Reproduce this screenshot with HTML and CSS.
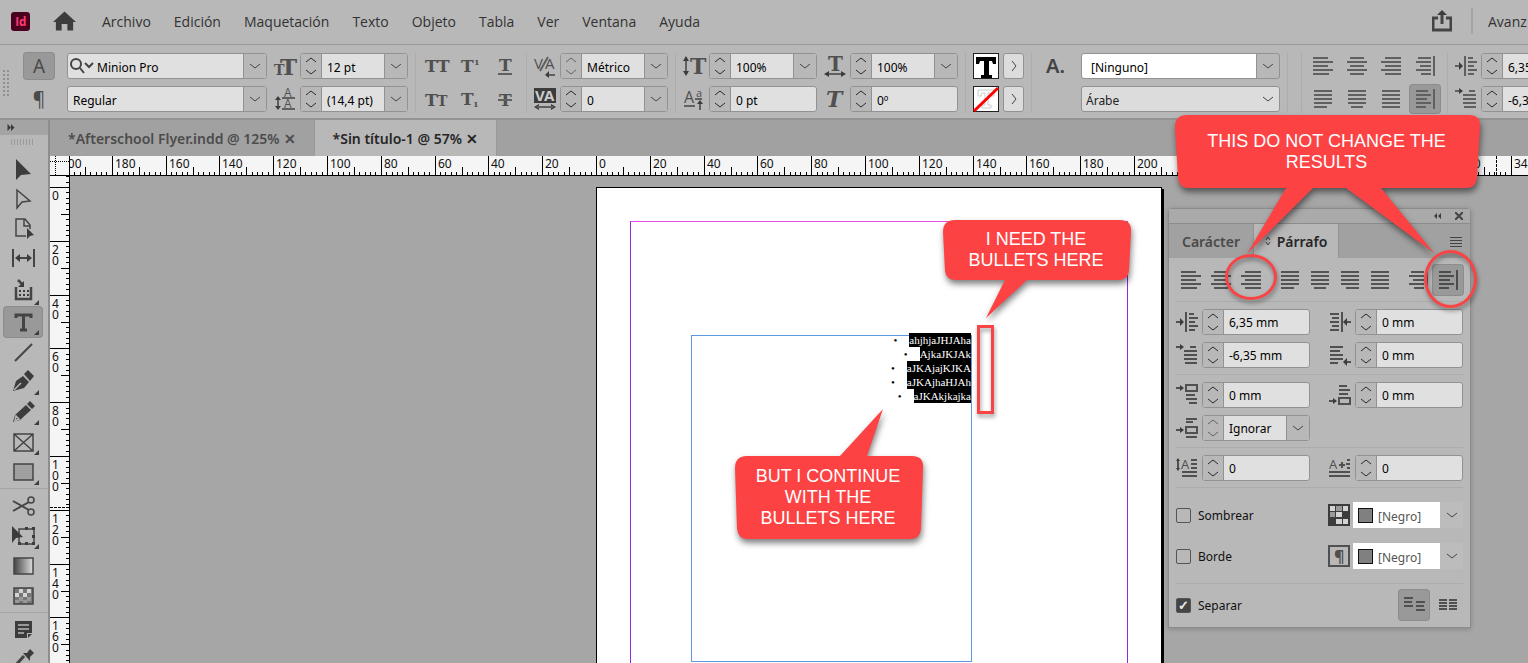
FILE: index.html
```html
<!DOCTYPE html>
<html lang="es">
  <head>
    <meta charset="UTF-8" />
    <meta name="viewport" content="width=device-width, initial-scale=1.0" />
    <title>Sin título-1</title>
    <link rel="stylesheet" href="styles.css">
  </head>

  <body>
    <!-- icon set -->
    <svg class="defs" aria-hidden="true">
      <symbol id="down" viewBox="0 0 12 12"><path d="M1 4l5 4 5-4" /></symbol>
      <symbol id="up" viewBox="0 0 12 12"><path d="M1 8l5-4 5 4" /></symbol>
      <symbol id="right" viewBox="0 0 12 12"><path d="M4 1l4 5-4 5" /></symbol>
      <symbol id="al-left" viewBox="0 0 22 22"><path d="M1 3h15M1 7h20M1 11h15M1 15h20M1 19h16" /></symbol>
      <symbol id="al-center" viewBox="0 0 22 22"><path d="M4 3h14M1 7h20M4 11h14M1 15h20M4 19h14" /></symbol>
      <symbol id="al-right" viewBox="0 0 22 22"><path d="M5 3h16M1 7h20M5 11h16M1 15h20M5 19h16" /></symbol>
      <symbol id="ju-left" viewBox="0 0 22 22"><path d="M2 3h18M2 7h18M2 11h18M2 15h18M2 19h13" /></symbol>
      <symbol id="ju-center" viewBox="0 0 22 22"><path d="M2 3h18M2 7h18M2 11h18M2 15h18M5 19h12" /></symbol>
      <symbol id="ju-right" viewBox="0 0 22 22"><path d="M2 3h18M2 7h18M2 11h18M2 15h18M7 19h13" /></symbol>
      <symbol id="ju-all" viewBox="0 0 22 22"><path d="M2 3h18M2 7h18M2 11h18M2 15h18M2 19h18" /></symbol>
      <symbol id="spine-to" viewBox="0 0 22 22"><path d="M4 3h13M2 7h15M6 11h11M2 15h15M7 19h10M20 1v20" /></symbol>
      <symbol id="spine-off" viewBox="0 0 22 22"><path d="M2 3h12M2 7h15M2 11h11M2 15h15M2 19h10M20 1v20" /></symbol>
      <symbol id="in-left" viewBox="0 0 22 22"><path d="M0 11h6M10 1v20M13 3h5M13 7h9M13 11h6M13 15h9M13 19h6" /><path class="fill" d="M4 7l4 4-4 4z" /></symbol>
      <symbol id="in-right" viewBox="0 0 22 22"><path d="M22 11h-6M13 1v20M1 3h9M3 7h7M1 11h9M3 15h7M1 19h9" /><path class="fill" d="M18 7l-4 4 4 4z" /></symbol>
      <symbol id="in-first" viewBox="0 0 22 22"><path d="M0 3h5M14 3h6M8 7h13M8 11h13M8 15h13M9 19h12" /><path class="fill" d="M4 0l4 3-4 3z" /></symbol>
      <symbol id="in-last" viewBox="0 0 22 22"><path d="M1 3h13M1 7h10M1 11h13M1 15h13M1 19h8M22 18h-5" /><path class="fill" d="M18 14l-4 4 4 4z" /></symbol>
      <symbol id="sp-before" viewBox="0 0 22 22"><path d="M0 4h5M10 1h11v6h-11zM10 11h9M10 15h11M13 19h8" /><path class="fill" d="M4 1l4 3-4 3z" /></symbol>
      <symbol id="sp-after" viewBox="0 0 22 22"><path d="M10 2h8M10 6h11M10 10h9M0 17h5M10 14h11v6h-11z" /><path class="fill" d="M4 14l4 3-4 3z" /></symbol>
      <symbol id="sp-between" viewBox="0 0 22 22"><path d="M10 2h11M10 5h7M0 13h5M10 10h11v6h-11zM10 20h11" /><path class="fill" d="M4 10l4 3-4 3z" /></symbol>
      <symbol id="drop-lines" viewBox="0 0 22 22"><path d="M2 3v9M15 3h6M15 7h6M15 11h6M6 15h15M6 19h15" /><path class="fill" d="M2 1l2 3h-4zM2 14l2-3h-4z" /><text x="5" y="12" font-size="13">A</text></symbol>
      <symbol id="drop-chars" viewBox="0 0 22 22"><path d="M10 8h6M13 5v6M18 3h3M17 7h4M18 11h3M0 15h21M0 19h21" /><text x="0" y="12" font-size="13">A</text></symbol>
      <symbol id="corner" viewBox="0 0 6 6"><path class="fill" d="M6 0v6h-6z" /></symbol>
    </svg>

    <header class="menubar">
      <svg class="logo" viewBox="0 0 18 18"><rect width="18" height="18" rx="3" /><text x="4" y="13">Id</text></svg>
      <svg class="home" viewBox="0 0 24 22"><path d="M12 1L0 12h3v9h6v-7h6v7h6v-9h3z" /></svg>
      <nav class="menu">
        <a href="#">Archivo</a>
        <a href="#">Edición</a>
        <a href="#">Maquetación</a>
        <a href="#">Texto</a>
        <a href="#">Objeto</a>
        <a href="#">Tabla</a>
        <a href="#">Ver</a>
        <a href="#">Ventana</a>
        <a href="#">Ayuda</a>
      </nav>
      <button class="share" aria-label="Compartir">
        <svg viewBox="0 0 20 22"><path d="M6 8H1v12h18V8h-5M10 14V3" /><path class="fill" d="M10 0l5 5H5z" /></svg>
      </button>
      <a class="workspace-name" href="#">Avanz</a>
    </header>

    <section class="control">
      <div class="grip"></div>
      <div class="stack modes">
        <button class="mode on">A</button>
        <button class="mode">¶</button>
      </div>

      <div class="stack fonts">
        <div class="field">
          <label class="search">
            <svg class="lens" viewBox="0 0 24 16"><circle cx="6" cy="6" r="5" /><path d="M10 10l4 5M15 5l4 4 4-4" /></svg>
            <input type="text" value="Minion Pro" aria-label="Fuente" />
          </label>
          <button class="drop" aria-label="Abrir"><svg><use href="#down" /></svg></button>
        </div>
        <div class="field">
          <input type="text" value="Regular" aria-label="Estilo" />
          <button class="drop" aria-label="Abrir"><svg><use href="#down" /></svg></button>
        </div>
      </div>

      <div class="stack">
        <div class="line">
          <svg class="ico" viewBox="0 0 22 22"><text class="slab" x="0" y="20" font-size="14">T</text><text class="slab" x="6" y="20" font-size="23">T</text></svg>
          <div class="field num">
            <div class="spin"><button aria-label="Más"><svg><use href="#up" /></svg></button><button aria-label="Menos"><svg><use href="#down" /></svg></button></div>
            <input type="text" value="12 pt" aria-label="Tamaño" />
            <button class="drop" aria-label="Abrir"><svg><use href="#down" /></svg></button>
          </div>
        </div>
        <div class="line">
          <svg class="ico" viewBox="0 0 22 22"><path d="M4 11v8M8 10h13M8 21h13" /><path class="fill" d="M4 8l3 4H1zM4 22l3-4H1z" /><text x="10" y="9" font-size="12">A</text><text x="10" y="20" font-size="12">A</text></svg>
          <div class="field num">
            <div class="spin"><button aria-label="Más"><svg><use href="#up" /></svg></button><button aria-label="Menos"><svg><use href="#down" /></svg></button></div>
            <input type="text" value="(14,4 pt)" aria-label="Interlineado" />
            <button class="drop" aria-label="Abrir"><svg><use href="#down" /></svg></button>
          </div>
        </div>
      </div>

      <div class="sep"></div>
      <div class="type-grid">
        <button aria-label="Mayúsculas"><svg class="ico wide" viewBox="0 0 28 22"><text class="slab" x="2" y="17" font-size="17">T</text><text class="slab" x="14" y="17" font-size="17">T</text></svg></button>
        <button aria-label="Superíndice"><svg class="ico wide" viewBox="0 0 28 22"><text class="slab" x="4" y="17" font-size="17">T</text><text class="slab" x="17" y="10" font-size="8">1</text></svg></button>
        <button aria-label="Subrayado"><svg class="ico wide" viewBox="0 0 28 22"><text class="slab" x="8" y="16" font-size="17">T</text><path d="M7 19h14" /></svg></button>
        <button aria-label="Versalitas"><svg class="ico wide" viewBox="0 0 28 22"><text class="slab" x="2" y="18" font-size="17">T</text><text class="slab" x="14" y="18" font-size="14">T</text></svg></button>
        <button aria-label="Subíndice"><svg class="ico wide" viewBox="0 0 28 22"><text class="slab" x="4" y="17" font-size="17">T</text><text class="slab" x="16" y="19" font-size="8">1</text></svg></button>
        <button aria-label="Tachado"><svg class="ico wide" viewBox="0 0 28 22"><text class="slab" x="8" y="18" font-size="17">T</text><path d="M7 12h14" /></svg></button>
      </div>
      <div class="sep"></div>

      <div class="stack">
        <div class="line">
          <svg class="ico" viewBox="0 0 22 22"><text x="0" y="14" font-size="15">V</text><text x="11" y="14" font-size="15">A</text><path d="M6 16L14 2M14 20h7" /><path class="fill" d="M15 16l-4 4 4 3z" /></svg>
          <div class="field num">
            <div class="spin off"><button aria-label="Más"><svg><use href="#up" /></svg></button><button aria-label="Menos"><svg><use href="#down" /></svg></button></div>
            <input type="text" value="Métrico" aria-label="Kerning" />
            <button class="drop" aria-label="Abrir"><svg><use href="#down" /></svg></button>
          </div>
        </div>
        <div class="line">
          <svg class="ico" viewBox="0 0 22 22"><path class="fill" d="M0 0h22v15H0zM0 19l5-3v6zM22 19l-5-3v6z" /><path d="M3 19h16" /><text class="light" x="1" y="13" font-size="15">V</text><text class="light" x="10" y="13" font-size="15">A</text></svg>
          <div class="field num">
            <div class="spin"><button aria-label="Más"><svg><use href="#up" /></svg></button><button aria-label="Menos"><svg><use href="#down" /></svg></button></div>
            <input type="text" value="0" aria-label="Tracking" />
            <button class="drop" aria-label="Abrir"><svg><use href="#down" /></svg></button>
          </div>
        </div>
      </div>
      <div class="sep"></div>

      <div class="stack">
        <div class="line">
          <svg class="ico" viewBox="0 0 22 22"><path d="M3 5v12" /><path class="fill" d="M3 1l3 5H0zM3 21l3-5H0z" /><text class="slab" x="7" y="19" font-size="22">T</text></svg>
          <div class="field num">
            <div class="spin"><button aria-label="Más"><svg><use href="#up" /></svg></button><button aria-label="Menos"><svg><use href="#down" /></svg></button></div>
            <input type="text" value="100%" aria-label="Escala vertical" />
            <button class="drop" aria-label="Abrir"><svg><use href="#down" /></svg></button>
          </div>
        </div>
        <div class="line">
          <svg class="ico" viewBox="0 0 22 22"><text x="1" y="15" font-size="16">A</text><text x="13" y="9" font-size="11">a</text><path d="M1 18h11M12 11h7M17 15v7" /><path class="fill" d="M17 12l3 4h-6z" /></svg>
          <div class="field num">
            <div class="spin"><button aria-label="Más"><svg><use href="#up" /></svg></button><button aria-label="Menos"><svg><use href="#down" /></svg></button></div>
            <input type="text" value="0 pt" aria-label="Desplazamiento vertical" />
          </div>
        </div>
      </div>

      <div class="stack">
        <div class="line">
          <svg class="ico" viewBox="0 0 22 22"><text class="slab" x="4" y="16" font-size="20">T</text><path d="M3 19h16" /><path class="fill" d="M0 19l5-3v6zM22 19l-5-3v6z" /></svg>
          <div class="field num">
            <div class="spin"><button aria-label="Más"><svg><use href="#up" /></svg></button><button aria-label="Menos"><svg><use href="#down" /></svg></button></div>
            <input type="text" value="100%" aria-label="Escala horizontal" />
            <button class="drop" aria-label="Abrir"><svg><use href="#down" /></svg></button>
          </div>
        </div>
        <div class="line">
          <svg class="ico" viewBox="0 0 22 22"><text class="slab slant" x="2" y="19" font-size="22">T</text></svg>
          <div class="field num">
            <div class="spin"><button aria-label="Más"><svg><use href="#up" /></svg></button><button aria-label="Menos"><svg><use href="#down" /></svg></button></div>
            <input type="text" value="0º" aria-label="Inclinación" />
          </div>
        </div>
      </div>
      <div class="sep"></div>

      <div class="stack">
        <div class="line">
          <svg class="swatch" viewBox="0 0 26 26"><rect width="26" height="26" fill="#222" /><rect x="1" y="1" width="24" height="24" fill="#fff" /><path d="M3 4h20v7h-3l-1-3h-3v14h3v3H8v-3h3V8H7l-1 3H3z" fill="#000" /></svg>
          <button class="more" aria-label="Relleno"><svg><use href="#right" /></svg></button>
        </div>
        <div class="line">
          <svg class="swatch" viewBox="0 0 26 26"><rect width="26" height="26" fill="#222" /><rect x="1" y="1" width="24" height="24" fill="#fff" /><path d="M5 4h16v6h-3l-1-3h-2v12h3v3H9v-3h3V7H9l-1 3H5z" fill="none" stroke="#ccc" /><path d="M1 25L25 2" stroke="#f00" stroke-width="3" /></svg>
          <button class="more" aria-label="Trazo"><svg><use href="#right" /></svg></button>
        </div>
      </div>
      <div class="sep"></div>

      <div class="char-style">
        <span class="style-mark">A.</span>
        <div class="stack styles">
          <div class="pick split white">
            <select aria-label="Estilo de carácter"><option>[Ninguno]</option></select>
            <svg><use href="#down" /></svg>
          </div>
          <div class="pick">
            <select aria-label="Idioma"><option>Árabe</option></select>
            <svg><use href="#down" /></svg>
          </div>
        </div>
      </div>
      <div class="sep"></div>
      <div class="sep second"></div>

      <div class="align-grid">
        <button aria-label="Izquierda"><svg class="ico"><use href="#al-left" /></svg></button>
        <button aria-label="Centro"><svg class="ico"><use href="#al-center" /></svg></button>
        <button aria-label="Derecha"><svg class="ico"><use href="#al-right" /></svg></button>
        <button aria-label="Hacia el lomo"><svg class="ico"><use href="#spine-to" /></svg></button>
        <button aria-label="Justificar izquierda"><svg class="ico"><use href="#ju-left" /></svg></button>
        <button aria-label="Justificar centro"><svg class="ico"><use href="#ju-center" /></svg></button>
        <button aria-label="Justificar todo"><svg class="ico"><use href="#ju-all" /></svg></button>
        <button class="on" aria-label="Opuesto al lomo"><svg class="ico"><use href="#spine-off" /></svg></button>
      </div>
      <div class="sep"></div>

      <div class="stack">
        <div class="line">
          <svg class="ico"><use href="#in-left" /></svg>
          <div class="field num">
            <div class="spin"><button aria-label="Más"><svg><use href="#up" /></svg></button><button aria-label="Menos"><svg><use href="#down" /></svg></button></div>
            <input type="text" value="6,35 mm" aria-label="Sangría izquierda" />
          </div>
        </div>
        <div class="line">
          <svg class="ico"><use href="#in-first" /></svg>
          <div class="field num">
            <div class="spin"><button aria-label="Más"><svg><use href="#up" /></svg></button><button aria-label="Menos"><svg><use href="#down" /></svg></button></div>
            <input type="text" value="-6,35 mm" aria-label="Sangría primera línea" />
          </div>
        </div>
      </div>
    </section>

    <div class="main">
      <aside class="tools">
        <div class="tools-head"><svg viewBox="0 0 8 8"><path class="fill" d="M0 0l4 4-4 4zM4 0l4 4-4 4z" /></svg></div>
        <div class="tools-grip"></div>
        <button class="tool" aria-label="Selección"><svg viewBox="0 2 26 26"><path class="fill" d="M6 2v21l5-5 10-1z" /></svg></button>
        <button class="tool" aria-label="Selección directa"><svg viewBox="0 3 26 26"><path d="M7 4v18l5-6 8-1z" /></svg></button>
        <button class="tool" aria-label="Página"><svg viewBox="0 4 26 26"><path d="M16 21H6V4h9l5 6v4M14 4v7h6" /><path class="fill" d="M17 13v11l3-3 4-1z" /></svg></button>
        <button class="tool" aria-label="Espacio"><svg viewBox="0 4 26 26"><path d="M3 4v18M24 4v18M7 13h12" stroke-width="2" /><path class="fill" d="M5 13l5-4v8zM22 13l-5-4v8z" /></svg></button>
        <button class="tool" aria-label="Recopilador"><svg viewBox="0 2 26 26"><path d="M6 10v12h15V10M8 3l5 5" stroke-width="2.5" /><path class="fill" d="M14 4v6H8zM9 13h2v2H9zM13 13h2v2h-2zM17 13h2v2h-2zM9 17h2v2H9zM13 17h2v2h-2zM17 17h2v2h-2z" /></svg><svg class="nub"><use href="#corner" /></svg></button>
        <button class="tool on" aria-label="Texto"><svg viewBox="0 0 26 26"><path d="M6 9V6h15v3M13.5 6v15M10 21h7" stroke-width="3" /></svg><svg class="nub"><use href="#corner" /></svg></button>
        <button class="tool" aria-label="Línea"><svg viewBox="0 0 26 26"><path d="M5 22L22 5" stroke-width="2" /></svg></button>
        <button class="tool" aria-label="Pluma"><svg viewBox="0 0 26 26"><path class="fill" d="M3 22l3-10 7-5 6 6-5 6zM14 5l4-4 6 6-4 5z" /><path class="cut" d="M4 21l7-7" /></svg><svg class="nub"><use href="#corner" /></svg></button>
        <button class="tool" aria-label="Lápiz"><svg viewBox="0 0 26 26"><path class="fill" d="M3 23l2-7L16 6l5 5-11 10zM17 5l3-3 5 5-3 3z" /><path class="cut" d="M6 17l3 3-4 2z" /></svg><svg class="nub"><use href="#corner" /></svg></button>
        <button class="tool" aria-label="Marco rectangular"><svg viewBox="0 0 26 26"><path d="M4 5h19v17H4zM4 5l19 17M23 5L4 22" /></svg><svg class="nub"><use href="#corner" /></svg></button>
        <button class="tool" aria-label="Rectángulo"><svg viewBox="0 0 26 26"><path d="M4 5h19v16H4z" fill="#a0a0a0" /></svg><svg class="nub"><use href="#corner" /></svg></button>
        <div class="tools-sep"></div>
        <button class="tool" aria-label="Tijeras"><svg viewBox="0 0 26 26"><path d="M3 8l16 9M3 18l16-9" stroke-width="2" /><circle cx="21" cy="7" r="3" /><circle cx="21" cy="19" r="3" /></svg></button>
        <button class="tool" aria-label="Transformación libre"><svg viewBox="0 0 26 26"><path d="M9 6h15v15H9z" /><path class="fill" d="M2 3v17l4-5 7-1zM15 4h3v3h-3zM22 4h3v3h-3zM22 12h3v3h-3zM22 19h3v3h-3zM15 19h3v3h-3zM8 19h3v3H8z" /></svg><svg class="nub"><use href="#corner" /></svg></button>
        <button class="tool" aria-label="Muestra de degradado"><svg viewBox="0 0 26 26"><defs><linearGradient id="fade"><stop offset="0" stop-color="#444" /><stop offset="1" stop-color="#ddd" /></linearGradient></defs><path d="M4 5h19v16H4z" fill="url(#fade)" /></svg></button>
        <button class="tool" aria-label="Desvanecer"><svg viewBox="0 0 26 26"><path d="M4 5h19v16H4z" fill="#777" /><path class="pale" d="M9 6h4v4H9zM17 6h4v4h-4zM5 10h4v4H5zM13 10h4v4h-4z" /><path class="pale dim" d="M9 14h4v4H9zM17 14h4v4h-4zM5 17h4v3H5zM13 17h4v3h-4z" /></svg></button>
        <div class="tools-sep"></div>
        <button class="tool" aria-label="Nota"><svg viewBox="0 0 26 26"><path class="fill" d="M5 4h17v12h-5v5H5zM18 17h4l-4 4z" /><path class="cut" d="M8 8h11M8 12h11M8 16h6" /></svg></button>
        <button class="tool" aria-label="Cuentagotas"><svg viewBox="0 0 26 26"><path class="fill" d="M13 6l4 0 3-4 4 4-4 4v4z" /><path d="M14 9L4 20" stroke-width="3" /></svg></button>
      </aside>

      <div class="document">
        <div class="tabs">
          <div class="tab"><span>*Afterschool Flyer.indd @ 125%</span><button aria-label="Cerrar">✕</button></div>
          <div class="tab current"><span>*Sin título-1 @ 57%</span><button aria-label="Cerrar">✕</button></div>
        </div>
        <div class="view">
          <div class="ruler-corner"></div>
          <svg class="ruler-x"></svg>
          <svg class="ruler-y"></svg>
          <div class="canvas">
            <div class="page">
              <div class="margins"></div>
              <div class="frame">
                <ul class="story">
                  <li><span>ahjhjaJHJAha</span></li>
                  <li><span>AjkaJKJAk</span></li>
                  <li><span>aJKAjajKJKA</span></li>
                  <li><span>aJKAjhaHJAh</span></li>
                  <li><span>aJKAkjkajka</span></li>
                </ul>
              </div>
            </div>
          </div>
        </div>
      </div>
    </div>

    <section class="panel">
      <div class="panel-title">
        <button aria-label="Contraer"><svg viewBox="0 0 8 8"><path class="fill" d="M4 1L1 4l3 3zM8 1L5 4l3 3z" /></svg></button>
        <button aria-label="Cerrar"><svg viewBox="0 0 8 8"><path d="M0 0l8 8M8 0L0 8" stroke-width="2" /></svg></button>
      </div>
      <div class="panel-tabs">
        <button class="ptab">Carácter</button>
        <button class="ptab current"><svg viewBox="0 0 6 10"><path d="M1 4l2-3 2 3M1 6l2 3 2-3" /></svg>Párrafo</button>
        <button class="panel-menu" aria-label="Menú"><svg viewBox="0 0 12 10"><path d="M0 1h12M0 4h12M0 7h12M0 10h12" /></svg></button>
      </div>
      <div class="panel-body">
        <div class="aligns">
          <div>
            <button aria-label="Izquierda"><svg class="ico"><use href="#al-left" /></svg></button>
            <button aria-label="Centro"><svg class="ico"><use href="#al-center" /></svg></button>
            <button aria-label="Derecha"><svg class="ico"><use href="#al-right" /></svg></button>
          </div>
          <div>
            <button aria-label="Justificar izquierda"><svg class="ico"><use href="#ju-left" /></svg></button>
            <button aria-label="Justificar centro"><svg class="ico"><use href="#ju-center" /></svg></button>
            <button aria-label="Justificar derecha"><svg class="ico"><use href="#ju-right" /></svg></button>
            <button aria-label="Justificar todo"><svg class="ico"><use href="#ju-all" /></svg></button>
          </div>
          <div>
            <button aria-label="Hacia el lomo"><svg class="ico"><use href="#spine-to" /></svg></button>
            <button class="on" aria-label="Opuesto al lomo"><svg class="ico"><use href="#spine-off" /></svg></button>
          </div>
        </div>

        <div class="block">
          <div class="line">
            <svg class="ico"><use href="#in-left" /></svg>
            <div class="field num">
              <div class="spin"><button aria-label="Más"><svg><use href="#up" /></svg></button><button aria-label="Menos"><svg><use href="#down" /></svg></button></div>
              <input type="text" value="6,35 mm" aria-label="Sangría izquierda" />
            </div>
          </div>
          <div class="line">
            <svg class="ico"><use href="#in-right" /></svg>
            <div class="field num">
              <div class="spin"><button aria-label="Más"><svg><use href="#up" /></svg></button><button aria-label="Menos"><svg><use href="#down" /></svg></button></div>
              <input type="text" value="0 mm" aria-label="Sangría derecha" />
            </div>
          </div>
          <div class="line">
            <svg class="ico"><use href="#in-first" /></svg>
            <div class="field num">
              <div class="spin"><button aria-label="Más"><svg><use href="#up" /></svg></button><button aria-label="Menos"><svg><use href="#down" /></svg></button></div>
              <input type="text" value="-6,35 mm" aria-label="Sangría primera línea" />
            </div>
          </div>
          <div class="line">
            <svg class="ico"><use href="#in-last" /></svg>
            <div class="field num">
              <div class="spin"><button aria-label="Más"><svg><use href="#up" /></svg></button><button aria-label="Menos"><svg><use href="#down" /></svg></button></div>
              <input type="text" value="0 mm" aria-label="Sangría última línea" />
            </div>
          </div>
        </div>

        <div class="block">
          <div class="line">
            <svg class="ico"><use href="#sp-before" /></svg>
            <div class="field num">
              <div class="spin"><button aria-label="Más"><svg><use href="#up" /></svg></button><button aria-label="Menos"><svg><use href="#down" /></svg></button></div>
              <input type="text" value="0 mm" aria-label="Espacio anterior" />
            </div>
          </div>
          <div class="line">
            <svg class="ico"><use href="#sp-after" /></svg>
            <div class="field num">
              <div class="spin"><button aria-label="Más"><svg><use href="#up" /></svg></button><button aria-label="Menos"><svg><use href="#down" /></svg></button></div>
              <input type="text" value="0 mm" aria-label="Espacio posterior" />
            </div>
          </div>
          <div class="line">
            <svg class="ico"><use href="#sp-between" /></svg>
            <div class="field num">
              <div class="spin off"><button aria-label="Más"><svg><use href="#up" /></svg></button><button aria-label="Menos"><svg><use href="#down" /></svg></button></div>
              <input type="text" value="Ignorar" aria-label="Espacio entre párrafos" />
              <button class="drop" aria-label="Abrir"><svg><use href="#down" /></svg></button>
            </div>
          </div>
        </div>

        <div class="block">
          <div class="line">
            <svg class="ico"><use href="#drop-lines" /></svg>
            <div class="field num">
              <div class="spin"><button aria-label="Más"><svg><use href="#up" /></svg></button><button aria-label="Menos"><svg><use href="#down" /></svg></button></div>
              <input type="text" value="0" aria-label="Líneas de capitular" />
            </div>
          </div>
          <div class="line">
            <svg class="ico"><use href="#drop-chars" /></svg>
            <div class="field num">
              <div class="spin"><button aria-label="Más"><svg><use href="#up" /></svg></button><button aria-label="Menos"><svg><use href="#down" /></svg></button></div>
              <input type="text" value="0" aria-label="Caracteres capitulares" />
            </div>
          </div>
        </div>

        <div class="block paint">
          <div class="row">
            <label class="check"><input type="checkbox" />Sombrear</label>
            <div class="color">
              <svg class="ico" viewBox="0 0 22 22"><path class="fill" d="M0 0h22v22H0z" /><path class="pale" d="M2 2h5v5H2zM15 2h5v5h-5zM8 8h6v5H8zM8 15h6v5H8zM15 15h5v5h-5z" /><path class="pale dim" d="M8 2h6v5H8zM2 8h5v5H2z" /></svg>
              <div class="pick tint">
                <select aria-label="Color de sombreado"><option>[Negro]</option></select>
                <i></i>
                <svg><use href="#down" /></svg>
              </div>
            </div>
          </div>
          <div class="row">
            <label class="check"><input type="checkbox" />Borde</label>
            <div class="color">
              <svg class="ico" viewBox="0 0 22 22"><path d="M1 1h20v20H1z" stroke-width="2" /><text class="bold" x="6" y="17" font-size="16">¶</text></svg>
              <div class="pick tint">
                <select aria-label="Color de borde"><option>[Negro]</option></select>
                <i></i>
                <svg><use href="#down" /></svg>
              </div>
            </div>
          </div>
        </div>

        <div class="row last">
          <label class="check"><input type="checkbox" checked />Separar</label>
          <div class="aligns-end">
            <button class="on" aria-label="Cuadrícula no"><svg class="ico" viewBox="0 0 22 22"><path d="M1 4h9M1 8h8M1 12h9M13 8h9M13 12h8M13 16h9" /></svg></button>
            <button aria-label="Cuadrícula sí"><svg class="ico" viewBox="0 0 22 22"><path d="M2 6h8M2 9h8M2 12h8M2 15h8M12 6h8M12 9h8M12 12h8M12 15h8" /></svg></button>
          </div>
        </div>
      </div>
    </section>

    <!-- review notes over the workspace -->
    <div class="note note-results">
      <svg viewBox="0 0 306 140"><path d="M12 0H294Q306 0 305 12L302 63Q301 73 291 73H206L259 138L171 73H138L72 139L111 73H14Q4 73 3 63L0 12Q0 0 12 0Z" /></svg>
      <p>THIS DO NOT CHANGE THE RESULTS</p>
    </div>
    <div class="note note-need">
      <svg viewBox="0 0 189 98"><path d="M12 0H177Q189 0 188 12L186 51Q185 60 175 60H84L43 98L62 60H13Q3 60 2 51L0 12Q0 0 12 0Z" /></svg>
      <p>I NEED THE BULLETS HERE</p>
    </div>
    <div class="note note-continue">
      <svg viewBox="0 0 189 130"><path d="M12 47H105L148 0L132 47H177Q189 47 188 59L186 120Q185 130 175 130H13Q3 130 2 120L0 59Q0 47 12 47Z" /></svg>
      <p>BUT I CONTINUE WITH THE BULLETS HERE</p>
    </div>
    <div class="ring ring-right"></div>
    <div class="ring ring-spine"></div>
    <div class="target"></div>

    <script src="script.js"></script>
  </body>
</html>
```

FILE: styles.css
```css
* {
  box-sizing: border-box;
  margin: 0;
  padding: 0;
}

body {
  position: relative;
  display: flex;
  flex-direction: column;
  height: 100vh;
  overflow: hidden;
  background-color: #a6a6a6;
  color: #111;
  font-family: "Noto Sans", "Open Sans", sans-serif;
  font-size: 12px;
}

button {
  border: 0;
  background: none;
  color: inherit;
  font: inherit;
}

a {
  color: inherit;
  text-decoration: none;
}

svg {
  display: block;
  fill: none;
  stroke: #444;
}

svg text {
  fill: #505050;
  stroke: none;
  font-family: "Open Sans", sans-serif;
}

.defs {
  position: absolute;
  width: 0;
  height: 0;
}

.fill {
  fill: #3c3c3c;
  stroke: none;
}

.cut {
  stroke: #b8b8b8;
}

.pale {
  fill: #d4d4d4;
  stroke: none;
}

.dim {
  fill: #999;
}

.ico {
  flex: none;
  width: 22px;
  height: 22px;
  overflow: visible;
  stroke: #606060;
  stroke-width: 2px;
}

.wide {
  width: 28px;
}

svg .slab {
  font-family: "DejaVu Serif", serif;
  font-weight: bold;
}

svg .slant {
  font-style: italic;
}

svg .light {
  fill: #ccc;
  font-weight: bold;
}

svg .bold {
  font-weight: bold;
}

/* menu */
.menubar {
  display: flex;
  flex: none;
  align-items: center;
  height: 45px;
  padding: 0 0 2px 11px;
  border-bottom: 1px solid #9a9a9a;
  background-color: #b8b8b8;
  color: #333;
  font-family: "Open Sans", sans-serif;
  font-size: 14px;
  white-space: nowrap;
  overflow: hidden;
}

.logo {
  width: 19px;
  height: 19px;
  margin-right: 23px;
}

.logo rect {
  fill: #4b0020;
  stroke: none;
}

.logo text {
  fill: #ff3b74;
  font-size: 11px;
  font-weight: bold;
}

.home {
  width: 23px;
  height: 22px;
  margin-right: 26px;
}

.home path {
  fill: #3c3c3c;
  stroke: none;
}

.menu {
  display: flex;
  flex: 1;
  gap: 23px;
}

.share {
  width: 41px;
  height: 26px;
  border-right: 2px solid #a4a4a4;
}

.share svg {
  width: 20px;
  height: 22px;
  stroke-width: 3px;
}

.workspace-name {
  width: 55px;
  padding-left: 15px;
}

/* control bar */
.control {
  display: flex;
  flex: none;
  align-items: center;
  gap: 7px;
  height: 75px;
  padding: 2px 0 0 9px;
  border-bottom: 2px solid #949494;
  background-color: #b8b8b8;
  overflow: hidden;
}

.control > * {
  flex: none;
}

.control .field input,
.control .pick select {
  padding-top: 2px;
}

.grip {
  width: 7px;
  height: 28px;
  margin-left: -7px;
  background: radial-gradient(#909090 1px, transparent 1px) 0 0 / 4px 4px;
}

.stack {
  display: grid;
  grid-auto-rows: 26px;
  row-gap: 7px;
}

.modes {
  width: 44px;
  padding: 0 6px 0 8px;
}

.mode {
  color: #4a4a4a;
  font-size: 19px;
  line-height: 26px;
}

.on {
  border-radius: 3px;
  background-color: #999;
  box-shadow: 0 0 0 1px #8c8c8c;
}

.fonts {
  width: 200px;
}

.line {
  display: flex;
  align-items: center;
  gap: 4px;
}

.field {
  display: flex;
  height: 26px;
  border: 1px solid #929292;
  border-radius: 3px;
  background-color: #e0e0e0;
  overflow: hidden;
}

.num {
  width: 108px;
}

.field input {
  flex: 1;
  width: 0;
  min-width: 0;
  padding-left: 5px;
  border: 0;
  outline: 0;
  background: none;
  color: #000;
  font: inherit;
}

.search {
  display: flex;
  flex: 1;
  align-items: center;
}

.lens {
  width: 24px;
  height: 16px;
  margin-left: 2px;
  stroke-width: 2px;
}

.search .lens + input {
  padding-left: 3px;
}

.drop {
  display: grid;
  place-items: center;
  width: 23px;
  border-left: 1px solid #929292;
  background-color: #b8b8b8;
}

.drop svg,
.spin svg,
.more svg {
  width: 12px;
  height: 12px;
}

.spin {
  display: grid;
  grid-template-rows: 1fr 1fr;
  width: 21px;
  border-right: 1px solid #929292;
  background-color: #b8b8b8;
  stroke-width: 1px;
}

.spin svg {
  stroke: #2a2a2a;
}

.spin button {
  display: grid;
  place-items: center;
}

.off {
  width: 21px;
}

.off svg {
  opacity: 0.6;
}

.sep {
  width: 1px;
  height: 60px;
  background-color: #acacac;
}

.second {
  margin-left: 6px;
}

.type-grid {
  display: grid;
  grid-template-columns: repeat(3, 28px);
  grid-auto-rows: 26px;
  align-items: center;
  gap: 7px 6px;
}

.swatch {
  width: 26px;
  height: 26px;
  stroke: none;
}

.more {
  display: grid;
  place-items: center;
  width: 21px;
  height: 26px;
  border: 1px solid #929292;
  border-radius: 3px;
  background-color: #dcdcdc;
}

.char-style {
  display: flex;
}

.style-mark {
  width: 42px;
  padding-left: 7px;
  color: #444;
  font-size: 20px;
  font-weight: 600;
  line-height: 26px;
}

.styles {
  width: 199px;
}

/* select with its own arrow */
.pick {
  display: grid;
  align-items: center;
  height: 26px;
  border: 1px solid #929292;
  border-radius: 3px;
  background-color: #dcdcdc;
  overflow: hidden;
}

.pick > * {
  grid-area: 1 / 1;
}

.pick select {
  appearance: none;
  width: 100%;
  height: 24px;
  padding-left: 4px;
  border: 0;
  outline: 0;
  background: none;
  color: #222;
  font: inherit;
}

.pick svg {
  justify-self: end;
  width: 12px;
  height: 12px;
  margin-right: 5px;
  pointer-events: none;
}

.split {
  background: linear-gradient(to left, #b8b8b8 22px, #929292 22px, #929292 23px, #fff 23px);
}

.split select {
  padding-left: 9px;
  color: #000;
}

.align-grid {
  display: grid;
  grid-template-columns: repeat(4, 30px);
  grid-auto-rows: 28px;
  gap: 5px 4px;
  margin-left: -1px;
}

.align-grid button,
.aligns button,
.aligns-end button {
  display: grid;
  place-items: center;
}

/* workspace */
.main {
  display: flex;
  flex: 1;
  min-height: 0;
}

.tools {
  flex: none;
  width: 50px;
  border-right: 2px solid #8e8e8e;
  background-color: #b8b8b8;
  overflow: hidden;
}

.tools-head {
  height: 15px;
  padding: 4px 7px;
  background-color: #a4a4a4;
}

.tools-head svg {
  width: 8px;
  height: 7px;
}

.tools-grip {
  width: 24px;
  height: 6px;
  margin: 4px 0 12px 11px;
  background: repeating-linear-gradient(to right, #999 0 1px, transparent 1px 3px);
}

.tool {
  display: grid;
  place-items: center;
  width: 38px;
  height: 30px;
  margin-left: 4px;
}

.tool > * {
  grid-area: 1 / 1;
}

.tool svg {
  width: 26px;
  height: 26px;
  overflow: visible;
  stroke-width: 1.5px;
}

.tool .nub {
  place-self: end;
  width: 5px;
  height: 5px;
  margin: 0 3px 2px 0;
}

.tools-sep {
  height: 1px;
  margin: 1px 0 2px;
  background-color: #a4a4a4;
}

.document {
  display: flex;
  flex: 1;
  flex-direction: column;
  min-width: 0;
}

.tabs {
  display: flex;
  height: 36px;
  background-color: #a1a1a1;
}

.tab {
  display: flex;
  align-items: center;
  gap: 4px;
  padding: 0 18px;
  border-right: 1px solid #989898;
  color: #4c4c4c;
  font-size: 14px;
  font-weight: 600;
  white-space: nowrap;
}

.tab.current {
  background-color: #b8b8b8;
  color: #262626;
}

.view {
  display: grid;
  flex: 1;
  grid-template: 20px 1fr / 20px 1fr;
  min-height: 0;
}

.ruler-corner {
  border-right: 1px solid #000;
  border-bottom: 1px solid #000;
  background:
    repeating-linear-gradient(to right, #000 0 1px, transparent 1px 2px) 0 5px / 100% 1px no-repeat,
    repeating-linear-gradient(to bottom, #000 0 1px, transparent 1px 2px) 5px 0 / 1px 100% no-repeat,
    #f5f5f5;
}

.ruler-x,
.ruler-y {
  width: 100%;
  height: 100%;
  background-color: #f5f5f5;
  shape-rendering: crispEdges;
  stroke: #000;
  overflow: hidden;
}

.ruler-x text,
.ruler-y text {
  fill: #111;
  font-family: "Noto Sans", sans-serif;
  font-size: 12px;
}

.canvas {
  position: relative;
  overflow: hidden;
}

.page {
  position: absolute;
  left: 526px;
  top: 11px;
  width: 566px;
  height: 800px;
  border: 1px solid #000;
  background-color: #fff;
  box-shadow: 2px 2px 0 #000;
}

.margins {
  position: absolute;
  inset: 33px;
  border: 1px solid #8a2be2;
  border-top-color: #e44ff0;
}

.frame {
  position: absolute;
  left: 94px;
  top: 147px;
  width: 281px;
  height: 327px;
  border: 1px solid #5c9ae0;
}

.story {
  margin-top: -3px;
  color: #000;
  font-family: "Liberation Serif", serif;
  font-size: 11px;
  line-height: 14px;
  list-style: none;
}

.story li {
  display: flex;
  justify-content: flex-end;
  gap: 12px;
}

.story li::before {
  content: "•";
}

.story span {
  background-color: #000;
  color: #fff;
}

/* paragraph panel */
.panel {
  position: absolute;
  left: 1168px;
  top: 208px;
  width: 303px;
  border: 1px solid #8c8c8c;
  border-radius: 4px 4px 0 0;
  background-color: #b8b8b8;
  box-shadow: 0 1px 5px rgba(0, 0, 0, 0.2);
}

.panel-title {
  display: flex;
  align-items: center;
  justify-content: flex-end;
  gap: 14px;
  height: 15px;
  padding-right: 7px;
  border-bottom: 1px solid #8c8c8c;
  background-color: #aaa;
}

.panel-title svg {
  width: 8px;
  height: 8px;
}

.panel-tabs {
  display: flex;
  height: 34px;
  background-color: #a1a1a1;
  color: #4a4a4a;
  font-size: 14px;
  font-weight: 600;
}

.ptab {
  display: flex;
  align-items: center;
  justify-content: center;
  gap: 6px;
  width: 85px;
  border-right: 1px solid #949494;
}

.ptab svg {
  width: 6px;
  height: 10px;
}

.ptab.current {
  background-color: #b8b8b8;
  color: #262626;
}

.panel-menu {
  margin-left: auto;
  padding-right: 8px;
}

.panel-menu svg {
  width: 12px;
  height: 11px;
}

.panel-body {
  padding: 7px;
}

.panel-body .ico {
  stroke: #505050;
}

.aligns {
  display: flex;
  justify-content: space-between;
  padding-bottom: 6px;
  border-bottom: 1px solid #acacac;
}

.aligns div,
.aligns-end {
  display: flex;
}

.aligns button,
.aligns-end button {
  width: 30px;
  height: 30px;
}

.panel-body .aligns .ico {
  stroke: #333;
  stroke-width: 1.5px;
}

.block {
  display: grid;
  grid-template-columns: auto auto;
  justify-content: space-between;
  gap: 7px;
  padding: 7px 0 6px;
  border-bottom: 1px solid #acacac;
}

.paint {
  grid-template-columns: 1fr;
  justify-content: normal;
  gap: 15px;
  padding: 14px 0;
}

.row,
.color {
  display: flex;
  align-items: center;
  justify-content: space-between;
}

.color {
  gap: 3px;
}

.check {
  display: flex;
  align-items: center;
  gap: 7px;
}

.check input {
  appearance: none;
  width: 15px;
  height: 15px;
  border: 1px solid #555;
  border-radius: 2px;
}

.check input:checked {
  background-color: #444;
}

.check input:checked::before {
  content: "✓";
  display: block;
  color: #e8e8e8;
  font-size: 13px;
  font-weight: bold;
  line-height: 13px;
  text-align: center;
}

.tint {
  width: 110px;
  border: 0;
  border-radius: 0;
  background: linear-gradient(to left, #bcbcbc 23px, #fff 23px);
}

.tint select {
  padding: 2px 0 0 25px;
  color: #555;
}

.tint i {
  width: 15px;
  height: 15px;
  margin-left: 5px;
  border: 1px solid #111;
  background-color: #808080;
  pointer-events: none;
}

.last {
  padding-top: 6px;
}

.aligns-end {
  gap: 4px;
}

/* notes */
.note {
  position: absolute;
  color: #fff;
  font-family: "Liberation Sans", Arial, sans-serif;
  font-size: 18px;
  line-height: 21px;
  text-align: center;
}

.note svg {
  fill: #fd4244;
  stroke: none;
  filter: drop-shadow(1px 4px 3px rgba(0, 0, 0, 0.5));
}

.note p {
  position: absolute;
  inset: 0;
  padding: 9px 20px 0 17px;
}

.note-results {
  left: 1175px;
  top: 115px;
  width: 306px;
}

.note-results p {
  padding-top: 16px;
}

.note-need {
  left: 943px;
  top: 220px;
  width: 189px;
}

.note-continue {
  left: 735px;
  top: 409px;
  width: 189px;
}

.note-continue p {
  padding-top: 57px;
}

.ring,
.target {
  position: absolute;
  border: 3px solid #f94446;
  border-radius: 50%;
  filter: drop-shadow(1px 3px 2px rgba(0, 0, 0, 0.4));
}

.ring-right {
  left: 1225px;
  top: 254px;
  width: 52px;
  height: 46px;
}

.ring-spine {
  left: 1424px;
  top: 250px;
  width: 53px;
  height: 58px;
}

.target {
  left: 977px;
  top: 325px;
  width: 17px;
  height: 89px;
  border-radius: 0;
}
```

FILE: script.js
```js
// Rulers: one labelled tick every 20 mm, a medium one every 10, a short one every 2
var NS = "http://www.w3.org/2000/svg";
var STEP = 2.69; // pixels per mm at 57%

function add(svg, name, attrs, text) {
  var el = document.createElementNS(NS, name);
  for (var key in attrs) {
    el.setAttribute(key, attrs[key]);
  }
  if (text !== undefined) {
    el.textContent = text;
  }
  svg.appendChild(el);
}

function tickSize(mm) {
  if (mm % 20 === 0) return 20;
  return mm % 10 === 0 ? 9 : 4;
}

var rulerX = document.querySelector(".ruler-x");
var rulerY = document.querySelector(".ruler-y");
var rulerLeft = rulerX.getBoundingClientRect().left;
var note = document.querySelector(".note-results").getBoundingClientRect();
var d = "M0 19.5H" + rulerX.clientWidth;

for (var mm = -200; mm <= 340; mm += 2) {
  var x = Math.round(526 + mm * STEP);
  d += "M" + (x + 0.5) + " 20v-" + tickSize(mm);
  // no label where the note hides the whole number
  var left = rulerLeft + x;
  var hidden = left > note.left && left + 25 < note.right;
  if (mm % 20 === 0 && !hidden) {
    add(rulerX, "text", { x: x + 3, y: 12 }, Math.abs(mm));
  }
}
add(rulerX, "path", { d: d });
add(rulerX, "path", { d: "M1426.5 0v20", "stroke-dasharray": "3 1" });

d = "M19.5 0V" + rulerY.clientHeight;
for (mm = -4; mm <= 180; mm += 2) {
  var y = Math.round(11 + mm * STEP);
  d += "M20 " + (y + 0.5) + "h-" + tickSize(mm);
  if (mm % 20 === 0) {
    var digits = String(mm);
    for (var i = 0; i < digits.length; i++) {
      add(rulerY, "text", { x: 2, y: y + 13 + i * 11 }, digits[i]);
    }
  }
}
add(rulerY, "path", { d: d });
add(rulerY, "path", { d: "M0 331.5h20", "stroke-dasharray": "3 1" });
```
